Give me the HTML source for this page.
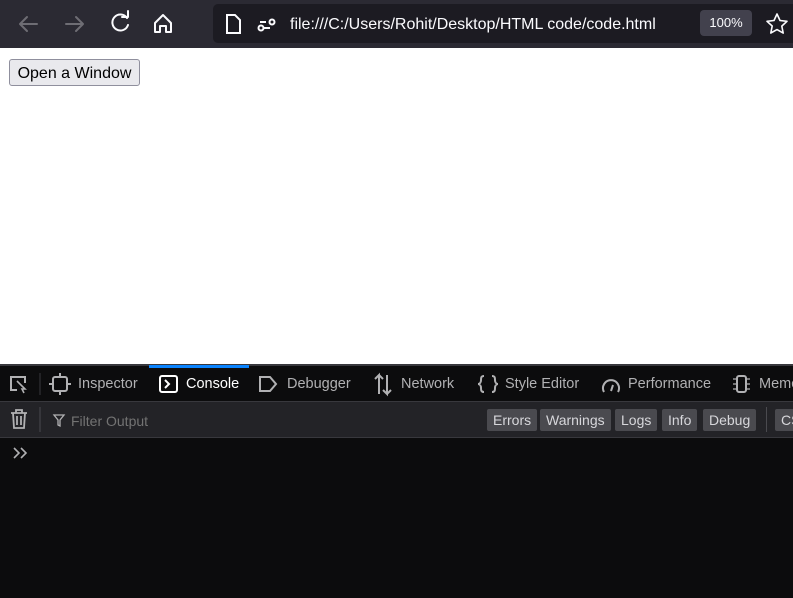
<!DOCTYPE html><html><head><style>
body{margin:0;width:793px;height:596px;overflow:hidden;font-family:"Liberation Sans",sans-serif;background:#fff;position:relative}
.a{position:absolute}
.tb{left:0;top:0;width:793px;height:48px;background:#2b2a33}
.url{left:213px;top:4px;width:600px;height:39px;background:#1c1b22;border-radius:5px}
.t{color:#fbfbfe;font-size:16px;white-space:nowrap}
.btn{left:9px;top:59px;width:129px;height:25px;border:1px solid #8f8f9d;border-radius:3px;background:#e9e9ed;font-size:16px;color:#000;line-height:27px;text-align:center}
.dt{left:0;top:364px;width:793px;height:232px;background:#0c0c0d;border-top:2px solid #38383d}
.tabs{left:0;top:366px;width:793px;height:35px;background:#0c0c0d;border-bottom:1px solid #38383d}
.tab{color:#b1b1b3;font-size:14.5px;top:376px}
.bar{left:0;top:402px;width:793px;height:35px;background:#232327;border-bottom:1px solid #38383d}
.f{top:409px;height:22px;background:#4a4a4f;color:#d7d7db;font-size:14px;line-height:23px;padding:0 6px;border-radius:2px}
</style></head><body>
<div class="a tb"></div>
<svg class="a" style="left:0;top:0" width="213" height="48" fill="none" stroke-width="2" stroke-linecap="round" stroke-linejoin="round">
<path d="M37 24H21M27 17l-7 7 7 7" stroke="#6e6d74"/>
<path d="M66 24h16M76 17l7 7-7 7" stroke="#6e6d74"/>
<path d="M127 18a8 8 0 1 0 1 7" stroke="#fbfbfe"/><path d="M122 17h6v-6" stroke="#fbfbfe"/>
<path d="M155 23l8-8 8 8v9h-5v-6h-6v6h-5z" stroke="#fbfbfe"/>
</svg>
<div class="a url"></div>
<svg class="a" style="left:220px;top:10px" width="70" height="28" fill="none" stroke="#fbfbfe" stroke-width="2"><path d="M7 5h8l5 5v13H7z"/><path d="M40 12h6M44 18h6" /><circle cx="52" cy="12" r="2.5"/><circle cx="41" cy="18" r="2.5"/></svg>
<div class="a t" style="left:290px;top:16px">file:///C:/Users/Rohit/Desktop/HTML code/code.html</div>
<div class="a" style="left:700px;top:10px;width:52px;height:26px;background:#42414d;border-radius:4px;color:#fbfbfe;font-size:13px;line-height:26px;text-align:center">100%</div>
<svg class="a" style="left:765px;top:12px" width="24" height="24" fill="none" stroke="#fbfbfe" stroke-width="1.6" stroke-linejoin="round"><path d="M12 2l3 6.5 7 .8-5.2 4.8 1.4 7L12 17.6 5.8 21l1.4-7L2 9.3l7-.8z"/></svg>
<div class="a btn">Open a Window</div>
<div class="a dt"></div>
<div class="a tabs"></div>
<div class="a" style="left:149px;top:365px;width:100px;height:3px;background:#0a84ff"></div>
<svg class="a" style="left:0;top:366px" width="793" height="35" fill="none" stroke="#b1b1b3" stroke-width="2">
<path d="M17 24h-6V11h14v6" /><path d="M17 15l8 8-3 0 2 4" stroke-width="1.6"/>
<line x1="40" y1="7" x2="40" y2="29" stroke="#38383d" stroke-width="1"/>
<rect x="53" y="11" width="14" height="14" rx="2"/><path d="M60 7v4M60 25v4M49 18h4M67 18h4"/>
<rect x="160" y="10" width="17" height="16" rx="2" stroke="#fff"/><path d="M165 14l4 4-4 4" stroke="#fff"/>
<path d="M260 11h10l6 7-6 7h-10z"/>
<path d="M379 28V9l-4 4M379 9l4 4M387 9v19l-4-4M387 28l4-4"/>
<path d="M484 10c-3 0-3 2-3 4s-1 4-3 4c2 0 3 2 3 4s0 4 3 4M492 10c3 0 3 2 3 4s1 4 3 4c-2 0-3 2-3 4s0 4-3 4"/>
<path d="M604 26a8 8 0 1 1 14 0"/><path d="M611 25l2-6"/>
<rect x="737" y="10" width="9" height="16" rx="2"/><path d="M733 13h4M733 18h4M733 23h4M746 13h4M746 18h4M746 23h4" stroke-width="1.3"/>
</svg>
<div class="a tab" style="left:78px">Inspector</div>
<div class="a tab" style="left:186px;color:#fff">Console</div>
<div class="a tab" style="left:287px">Debugger</div>
<div class="a tab" style="left:401px">Network</div>
<div class="a tab" style="left:505px">Style Editor</div>
<div class="a tab" style="left:628px">Performance</div>
<div class="a tab" style="left:759px">Memory</div>
<div class="a bar"></div>
<svg class="a" style="left:0;top:402px" width="480" height="35" fill="none" stroke="#b1b1b3" stroke-width="1.8">
<path d="M11 11h16M16 11V8h6v3M13 11l1 15h10l1-15M17 14v9M21 14v9"/>
<line x1="40" y1="5" x2="40" y2="30" stroke="#4a4a4f" stroke-width="1"/>
<path d="M54 13h10l-4 5v6l-2-1v-5z" stroke-width="1.3"/>
<line x1="481" y1="5" x2="481" y2="30" stroke="#4a4a4f" stroke-width="1"/>
</svg>
<div class="a" style="left:71px;top:413px;font-size:14px;color:#737373">Filter Output</div>
<div class="a f" style="left:487px">Errors</div>
<div class="a f" style="left:540px">Warnings</div>
<div class="a f" style="left:615px">Logs</div>
<div class="a f" style="left:662px">Info</div>
<div class="a f" style="left:703px">Debug</div>
<div class="a" style="left:766px;top:407px;width:1px;height:25px;background:#4a4a4f"></div>
<div class="a f" style="left:775px">CSS</div>
<svg class="a" style="left:12px;top:446px" width="18" height="14" fill="none" stroke="#b1b1b3" stroke-width="1.6"><path d="M2 2l5 5-5 5M9 2l5 5-5 5"/></svg>
</body></html>
